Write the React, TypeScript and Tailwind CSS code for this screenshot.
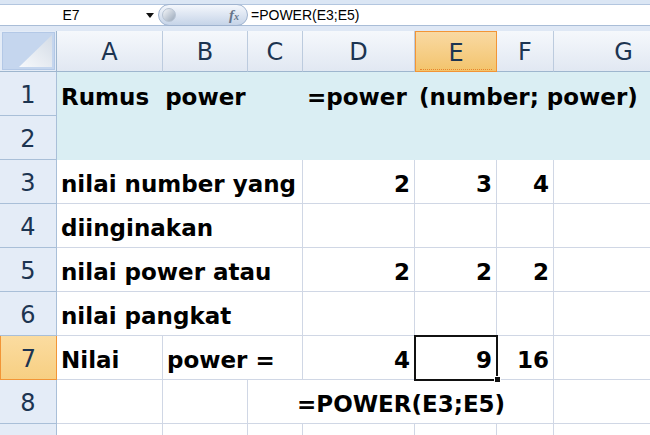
import React from "react";

type Col = { key: string; w: string };

const cols: Col[] = [
  { key: "A", w: "w-[106px]" },
  { key: "B", w: "w-[85px]" },
  { key: "C", w: "w-[55px]" },
  { key: "D", w: "w-[112px]" },
  { key: "E", w: "w-[82px]" },
  { key: "F", w: "w-[57px]" },
  { key: "G", w: "w-[140px]" },
];

type CellDef = {
  text?: string;
  right?: boolean;
  noLine?: boolean;
  selected?: boolean;
  pad?: string;
};

// one entry per row, seven cells each (A..G)
const rows: { n: number; fill?: boolean; active?: boolean; cells: CellDef[] }[] = [
  {
    n: 1,
    fill: true,
    cells: [{ text: "Rumus  power" }, {}, {}, { text: "=power" }, { text: "(number; power)" }, {}, {}],
  },
  { n: 2, fill: true, cells: [{}, {}, {}, {}, {}, {}, {}] },
  {
    n: 3,
    cells: [
      { text: "nilai number yang", noLine: true },
      { noLine: true },
      {},
      { text: "2", right: true },
      { text: "3", right: true },
      { text: "4", right: true },
      {},
    ],
  },
  {
    n: 4,
    cells: [{ text: "diinginakan", noLine: true }, { noLine: true }, {}, {}, {}, {}, {}],
  },
  {
    n: 5,
    cells: [
      { text: "nilai power atau", noLine: true },
      { noLine: true },
      {},
      { text: "2", right: true },
      { text: "2", right: true },
      { text: "2", right: true },
      {},
    ],
  },
  {
    n: 6,
    cells: [{ text: "nilai pangkat", noLine: true }, { noLine: true }, {}, {}, {}, {}, {}],
  },
  {
    n: 7,
    active: true,
    cells: [
      { text: "Nilai" },
      { text: "power =", noLine: true },
      {},
      { text: "4", right: true },
      { text: "9", right: true, selected: true },
      { text: "16", right: true },
      {},
    ],
  },
  {
    n: 8,
    cells: [
      {},
      {},
      { text: "=POWER(E3;E5)", noLine: true, pad: "pl-[49px]" },
      { noLine: true },
      { noLine: true },
      {},
      {},
    ],
  },
  { n: 9, cells: [{}, {}, {}, {}, {}, {}, {}] },
];

function FormulaBar() {
  return (
    <div className="font-['Liberation_Sans',sans-serif] text-[14px] text-black">
      <div className="h-[5px] bg-[#dbe6f4] border-b border-[#b3c6df]" />
      <div className="flex h-[21px] bg-white border-b border-[#a9bdd7]">
        <div className="w-[158px] flex items-center shrink-0">
          <div className="w-[142px] text-center leading-none">E7</div>
          <svg width="8" height="5" viewBox="0 0 8 5" className="ml-[4px]">
            <path d="M0 0 L8 0 L4 5 Z" fill="#111" />
          </svg>
        </div>
        <div className="relative w-[90px] h-[22px] -mt-[1px] rounded-full border border-[#9fb3cf] bg-linear-to-b from-[#f4f7fc] to-[#c6d4e8] flex items-center shrink-0">
          <div className="ml-[3px] w-[14px] h-[14px] rounded-full bg-linear-to-br from-[#f5f7fa] to-[#9aa8ba] border border-[#b7c3d3]" />
          <span className="ml-auto mr-[8px] font-['Liberation_Serif',serif] italic font-bold text-[15px] text-[#66758a] leading-none">
            f<span className="text-[10px]">x</span>
          </span>
        </div>
        <div className="pl-[3px] flex items-center leading-none">=POWER(E3;E5)</div>
      </div>
      <div className="h-[5px] bg-[#dfe8f5]" />
    </div>
  );
}

function ColumnHeader() {
  return (
    <div className="flex h-[41px] font-['DejaVu_Sans',sans-serif] font-normal text-[24px] text-[#1c3451]">
      <div className="w-[57px] shrink-0 bg-[#e4ecf7] border-r border-b border-[#9eb6ce] p-[1px] pl-[2px]">
        <div className="w-full h-full bg-[#c5d6ee] border border-[#b3c8e6] flex items-end justify-end p-[2px]">
          <svg width="33" height="32" viewBox="0 0 33 32">
            <defs>
              <linearGradient id="tri" x1="0" y1="1" x2="1" y2="0">
                <stop offset="0" stopColor="#f7f9fc" />
                <stop offset="1" stopColor="#d4dce6" />
              </linearGradient>
            </defs>
            <path d="M0 32 L33 0 L33 32 Z" fill="url(#tri)" />
          </svg>
        </div>
      </div>
      {cols.map((c) =>
        c.key === "E" ? (
          <div
            key={c.key}
            className={`${c.w} shrink-0 relative flex items-end justify-center pb-[6px] leading-none border border-[#f29536] bg-linear-to-b from-[#f9d9a2] to-[#f3c46c]`}
          >
            E
            <div className="absolute left-[4px] right-[4px] bottom-[1px] border-b border-dotted border-[#e8852c]" />
          </div>
        ) : (
          <div
            key={c.key}
            className={`${c.w} shrink-0 flex items-end justify-center pb-[7px] leading-none border-r border-b border-r-[#bccbde] border-b-[#9eb6ce] bg-linear-to-b from-[#f5f8fc] to-[#e1e8f2]`}
          >
            {c.key}
          </div>
        )
      )}
    </div>
  );
}

function Cell({ col, def, fill }: { col: Col; def: CellDef; fill?: boolean }) {
  const line = fill
    ? ""
    : def.noLine
    ? "border-b border-[#d0d7e5]"
    : "border-r border-b border-[#d0d7e5]";
  return (
    <div
      className={`${col.w} shrink-0 relative flex items-end whitespace-pre pb-[7px] text-[23px] leading-[23px] font-bold ${line} ${
        def.right ? "justify-end pr-[4px]" : def.pad ?? "pl-[4px]"
      }`}
    >
      {def.text && <span className="relative z-10">{def.text}</span>}
      {def.selected && (
        <>
          <div className="absolute -left-[1px] -top-[1px] w-[84px] h-[46px] border-2 border-[#111] z-20" />
          <div className="absolute -right-[5px] -bottom-[4px] w-[7px] h-[7px] bg-[#111] border border-white z-30" />
        </>
      )}
    </div>
  );
}

function Grid() {
  return (
    <div className="font-['DejaVu_Sans',sans-serif]">
      {rows.map((r) => (
        <div key={r.n} className={`flex h-[44px] ${r.fill ? "bg-[#daeef3]" : "bg-white"}`}>
          <div
            className={`w-[57px] shrink-0 flex items-end justify-center pb-[8px] text-[24px] font-normal leading-none text-[#1c3451] ${
              r.active
                ? "bg-linear-to-b from-[#fbdca0] to-[#f7cf82] border border-[#f29536] border-t-0"
                : "bg-[#e4ecf7] border-r border-b border-[#a9bfd8]"
            }`}
          >
            {r.n < 9 ? r.n : ""}
          </div>
          {cols.map((c, i) => (
            <Cell key={c.key} col={c} def={r.cells[i]} fill={r.fill} />
          ))}
        </div>
      ))}
    </div>
  );
}

export default function App() {
  return (
    <div className="w-[650px] h-[435px] overflow-hidden bg-white text-black">
      <FormulaBar />
      <ColumnHeader />
      <Grid />
    </div>
  );
}
